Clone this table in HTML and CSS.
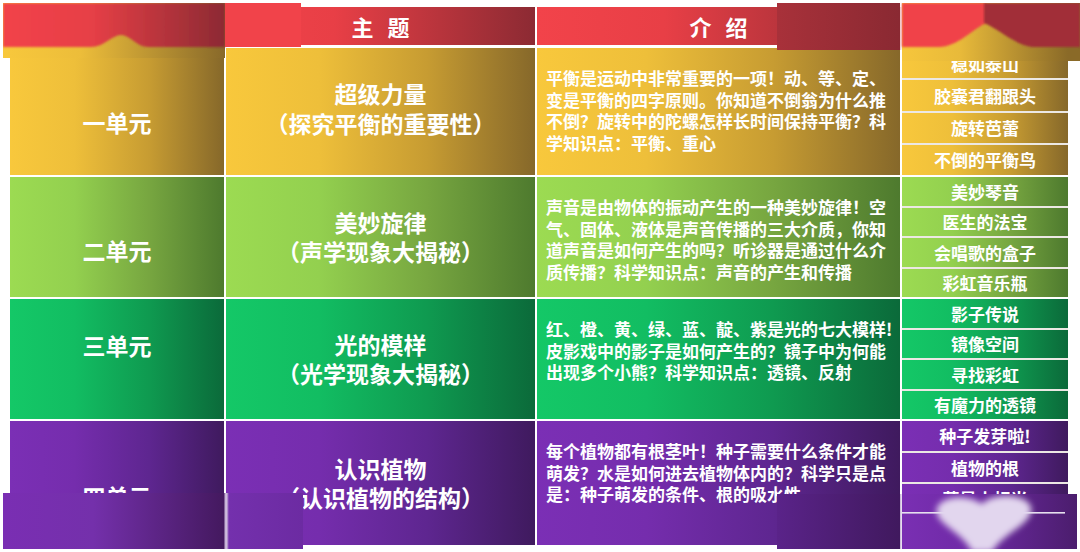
FILE: index.html
```html
<!DOCTYPE html>
<html lang="zh">
<head>
<meta charset="utf-8">
<title>课程表</title>
<link rel="stylesheet" href="styles.css">
</head>
<body>
<div class="page">
  <div class="table">
    <div class="hcell"></div>
    <div class="hcell"><span class="htext">主题</span></div>
    <div class="hcell"><span class="htext">介绍</span></div>
    <div class="hcell"></div>

    <div class="cell unit gold low first">一单元</div>
    <div class="cell topic gold first">超级力量<br>（探究平衡的重要性）</div>
    <div class="cell intro gold">平衡是运动中非常重要的一项！动、等、定、<br>变是平衡的四字原则。你知道不倒翁为什么推<br>不倒？旋转中的陀螺怎样长时间保持平衡？科<br>学知识点：平衡、重心</div>
    <div class="cell items gold">
      <div class="item">稳如泰山</div>
      <div class="item">胶囊君翻跟头</div>
      <div class="item">旋转芭蕾</div>
      <div class="item">不倒的平衡鸟</div>
    </div>

    <div class="cell unit lime low">二单元</div>
    <div class="cell topic lime">美妙旋律<br>（声学现象大揭秘）</div>
    <div class="cell intro lime">声音是由物体的振动产生的一种美妙旋律！空<br>气、固体、液体是声音传播的三大介质，你知<br>道声音是如何产生的吗？听诊器是通过什么介<br>质传播？科学知识点：声音的产生和传播</div>
    <div class="cell items lime">
      <div class="item">美妙琴音</div>
      <div class="item">医生的法宝</div>
      <div class="item">会唱歌的盒子</div>
      <div class="item">彩虹音乐瓶</div>
    </div>

    <div class="cell unit green high">三单元</div>
    <div class="cell topic green">光的模样<br>（光学现象大揭秘）</div>
    <div class="cell intro green">红、橙、黄、绿、蓝、靛、紫是光的七大模样!<br>皮影戏中的影子是如何产生的？镜子中为何能<br>出现多个小熊？科学知识点：透镜、反射</div>
    <div class="cell items green">
      <div class="item">影子传说</div>
      <div class="item">镜像空间</div>
      <div class="item">寻找彩虹</div>
      <div class="item">有魔力的透镜</div>
    </div>

    <div class="cell unit purple low">四单元</div>
    <div class="cell topic purple">认识植物<br>（认识植物的结构）</div>
    <div class="cell intro purple">每个植物都有根茎叶！种子需要什么条件才能<br>萌发？水是如何进去植物体内的？科学只是点<br>是：种子萌发的条件、根的吸水性</div>
    <div class="cell items purple">
      <div class="item">种子发芽啦!</div>
      <div class="item">植物的根</div>
      <div class="item">茎是小相当</div>
      <div class="item"></div>
    </div>
  </div>

  <svg class="ov ov-tl" width="298" height="55" viewBox="0 0 298 55">
    <defs>
      <linearGradient id="tlRed" gradientUnits="userSpaceOnUse" x1="0" y1="0" x2="222" y2="0">
        <stop offset="0" stop-color="#f2434a"/>
        <stop offset="0.4" stop-color="#e63f46"/>
        <stop offset="1" stop-color="#8c2a33"/>
      </linearGradient>
      <linearGradient id="tlGold" gradientUnits="userSpaceOnUse" x1="0" y1="0" x2="222" y2="0">
        <stop offset="0" stop-color="#f8c83c"/>
        <stop offset="0.35" stop-color="#ecbd3a"/>
        <stop offset="1" stop-color="#88692a"/>
      </linearGradient>
      <filter id="soft" x="-5%" y="-10%" width="110%" height="120%">
        <feGaussianBlur stdDeviation="1.2"/>
      </filter>
    </defs>
    <rect x="0" y="0" width="222" height="55" fill="url(#tlGold)"/>
    <path d="M0 0 H222 V44 H145 C134 44 127 32 118 32 C109 32 101 44 88 44 H0 Z" fill="url(#tlRed)" filter="url(#soft)"/>
    <rect x="222" y="0" width="76" height="44" fill="#f1434a"/>
  </svg>

  <svg class="ov ov-tr" width="303" height="58" viewBox="0 0 303 58">
    <defs>
      <linearGradient id="trDark" gradientUnits="userSpaceOnUse" x1="0" y1="0" x2="123" y2="0">
        <stop offset="0" stop-color="#a8313a"/>
        <stop offset="1" stop-color="#8a2932"/>
      </linearGradient>
      <linearGradient id="trGold" gradientUnits="userSpaceOnUse" x1="125" y1="0" x2="291" y2="0">
        <stop offset="0" stop-color="#f6c63c"/>
        <stop offset="0.35" stop-color="#e8ba3a"/>
        <stop offset="1" stop-color="#8a6a28"/>
      </linearGradient>
      <filter id="soft2" x="-5%" y="-10%" width="110%" height="120%">
        <feGaussianBlur stdDeviation="1.2"/>
      </filter>
    </defs>
    <rect x="0" y="0" width="123" height="47" fill="url(#trDark)"/>
    <rect x="123" y="4" width="1.5" height="43" fill="#e9c9c9" opacity="0.7"/>
    <rect x="125" y="0" width="178" height="58" fill="url(#trGold)"/>
    <path d="M125 0 H209 V20 C196 26 180 44 162 44 H125 Z" fill="#f0434a" filter="url(#soft2)"/>
    <path d="M207 0 H303 V44 H258 C240 44 222 26 207 20 Z" fill="#a12f39" filter="url(#soft2)"/>
  </svg>

  <div class="ov ov-bl"></div>

  <svg class="ov ov-br" width="300" height="55" viewBox="0 0 300 55">
    <defs>
      <linearGradient id="brA" gradientUnits="userSpaceOnUse" x1="0" y1="0" x2="123" y2="0">
        <stop offset="0" stop-color="#5a2389"/>
        <stop offset="1" stop-color="#40195e"/>
      </linearGradient>
      <linearGradient id="brB" gradientUnits="userSpaceOnUse" x1="125" y1="0" x2="300" y2="0">
        <stop offset="0" stop-color="#7a2fb3"/>
        <stop offset="0.4" stop-color="#6e2aa5"/>
        <stop offset="1" stop-color="#4b1d6d"/>
      </linearGradient>
      <filter id="blob" x="-30%" y="-30%" width="160%" height="160%">
        <feGaussianBlur stdDeviation="3"/>
      </filter>
    </defs>
    <rect x="0" y="0" width="123" height="55" fill="url(#brA)"/>
    <rect x="123" y="0" width="1.5" height="55" fill="#b9a2cc" opacity="0.7"/>
    <rect x="125" y="0" width="175" height="55" fill="url(#brB)"/>
    <rect x="125" y="18" width="163" height="1.6" fill="#e6e0ee"/>
    <path d="M160 20 C156 3 188 -2 205 10 C217 -3 258 0 254 18 C251 32 225 40 215 58 H195 C187 40 164 32 160 20 Z" fill="#e2d6ee" filter="url(#blob)"/>
  </svg>
</div>
</body>
</html>
```

FILE: styles.css
```css
html, body {
  margin: 0;
  padding: 0;
  background: #ffffff;
}

.page {
  position: relative;
  width: 1080px;
  height: 552px;
  overflow: hidden;
  background: #ffffff;
  font-family: "Noto Sans CJK SC", "Noto Sans", sans-serif;
  font-weight: 700;
  color: #ffffff;
}

.table {
  display: grid;
  grid-template-columns: 214px 309px 363px 166px;
  grid-template-rows: 39px 127px 120px 120px 124px;
  column-gap: 2px;
  row-gap: 2px;
  padding: 7px 0 0 10px;
}

.hcell {
  height: 38px;
  background: linear-gradient(90deg, #f2434a 0%, #e83f46 35%, #8c2a33 100%);
  display: flex;
  align-items: center;
  justify-content: center;
}

.htext {
  font-size: 22px;
  letter-spacing: 14px;
  padding-left: 14px;
  line-height: 1;
}

.cell {
  box-sizing: border-box;
  overflow: hidden;
}

.gold   { background: linear-gradient(90deg, #f8c83c 0%, #eebf3a 30%, #c79c32 65%, #86682a 100%); }
.lime   { background: linear-gradient(90deg, #9cdb52 0%, #93d04f 30%, #77a640 65%, #4e7a2e 100%); }
.green  { background: linear-gradient(90deg, #14c867 0%, #12bd62 30%, #0f9a50 65%, #0b6a3a 100%); }
.purple { background: linear-gradient(90deg, #7b2fb5 0%, #752dad 30%, #5e2690 65%, #3f1a5e 100%); }

.unit {
  display: flex;
  align-items: center;
  justify-content: center;
  font-size: 23px;
}

.unit.low  { padding-top: 26px; }
.unit.high { padding-bottom: 28px; }
.unit.first { padding-top: 20px; }

.topic {
  display: flex;
  align-items: center;
  justify-content: center;
  text-align: center;
  font-size: 23px;
  line-height: 29.5px;
}

.topic.first { padding-bottom: 6px; }

.intro {
  padding: 19px 0 0 9px;
  font-size: 17px;
  line-height: 21.5px;
  white-space: nowrap;
}

.items {
  display: flex;
  flex-direction: column;
}

.item {
  flex: 1;
  display: flex;
  align-items: center;
  justify-content: center;
  font-size: 17px;
  white-space: nowrap;
}

.item + .item {
  border-top: 2px solid #ece8e4;
}

.ov {
  position: absolute;
  display: block;
}

.ov-tl { left: 3px; top: 3px; }
.ov-tr { left: 777px; top: 3px; }
.ov-br { left: 777px; top: 494px; }

.ov-bl {
  left: 3px;
  top: 493px;
  width: 300px;
  height: 56px;
  background: linear-gradient(90deg, #7a2eb3 0%, #7430ab 30%, #44195f 73.5%, #cdbadc 74.2%, #cdbadc 74.6%, #7430ad 75.3%, #6c2ba2 100%);
}
```
